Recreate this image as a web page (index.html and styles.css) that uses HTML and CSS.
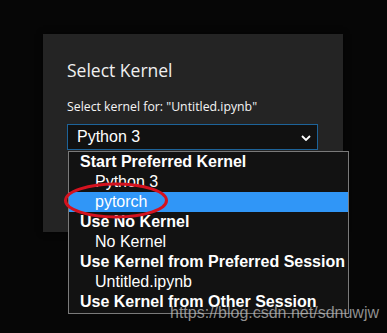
FILE: index.html
```html
<!DOCTYPE html>
<html lang="en">
<head>
    <meta charset="UTF-8">
    <title>Select Kernel</title>
    <link rel="stylesheet" href="styles.css">
</head>
<body>
    <div class="dialog">
        <h2 class="title">Select Kernel</h2>
        <p class="label">Select kernel for: "Untitled.ipynb"</p>
        <div class="picker">
            <div class="select">
                <span>Python 3</span>
                <svg class="chevron" width="10" height="6" viewBox="0 0 10 6">
                    <path d="M1 1 L5 5 L9 1" fill="none" stroke="#fff" stroke-width="1.8"/>
                </svg>
            </div>
            <ul class="options">
                <li class="group">Start Preferred Kernel</li>
                <li class="item">Python 3</li>
                <li class="item active">pytorch</li>
                <li class="group">Use No Kernel</li>
                <li class="item">No Kernel</li>
                <li class="group">Use Kernel from Preferred Session</li>
                <li class="item">Untitled.ipynb</li>
                <li class="group">Use Kernel from Other Session</li>
            </ul>
        </div>
    </div>
    <svg class="circle" width="106" height="40" viewBox="0 0 106 40">
        <ellipse cx="53" cy="19.5" rx="50.5" ry="16.5" fill="none" stroke="#d4121f" stroke-width="3"/>
    </svg>
    <div class="watermark">https://blog.csdn.net/sdnuwjw</div>
</body>
</html>
```

FILE: styles.css
```css
body {
    margin: 0;
    width: 387px;
    height: 333px;
    overflow: hidden;
    background-color: #060606;
    font-family: 'Liberation Sans', Arial, sans-serif;
    position: relative;
}

.dialog {
    margin: 34px 0 0 43px;
    width: 300px;
    height: 198px;
    background-color: #242424;
    box-sizing: border-box;
    padding: 24px 0 0 24px;
    box-shadow: 0 0 6px rgba(0, 0, 0, 0.6);
}

.title {
    margin: 0;
    font-family: 'Open Sans', 'Noto Sans', sans-serif;
    font-weight: normal;
    font-size: 17.5px;
    line-height: 24px;
    color: #f0f0f0;
}

.label {
    margin: 17px 0 0 0;
    font-family: 'Open Sans', 'Noto Sans', sans-serif;
    font-size: 12.3px;
    line-height: 16px;
    color: #f4f4f4;
}

.picker {
    position: relative;
    margin-top: 9px;
}

.select {
    width: 251px;
    height: 26px;
    box-sizing: border-box;
    border: 1px solid #1d6399;
    background-color: #111;
    color: #fff;
    font-size: 16px;
    display: flex;
    align-items: center;
    justify-content: space-between;
    padding: 0 6px 0 9px;
}

.chevron {
    margin-top: 1px;
}

.options {
    position: absolute;
    top: 27px;
    left: 1px;
    width: 281px;
    box-sizing: border-box;
    margin: 0;
    padding: 0 0 1px 0;
    list-style: none;
    border: 1px solid #7a7a7a;
    background-color: #121212;
    color: #fff;
    font-size: 16px;
}

.options li {
    height: 20px;
    line-height: 20px;
    white-space: nowrap;
}

.options .group {
    font-weight: bold;
    padding-left: 11px;
}

.options .item {
    padding-left: 26px;
}

.options .active {
    background-color: #3096f7;
}

.circle {
    position: absolute;
    left: 63px;
    top: 181px;
}

.watermark {
    position: absolute;
    left: 170px;
    top: 304px;
    font-size: 16px;
    color: rgba(190, 190, 190, 0.75);
    white-space: nowrap;
}
```
